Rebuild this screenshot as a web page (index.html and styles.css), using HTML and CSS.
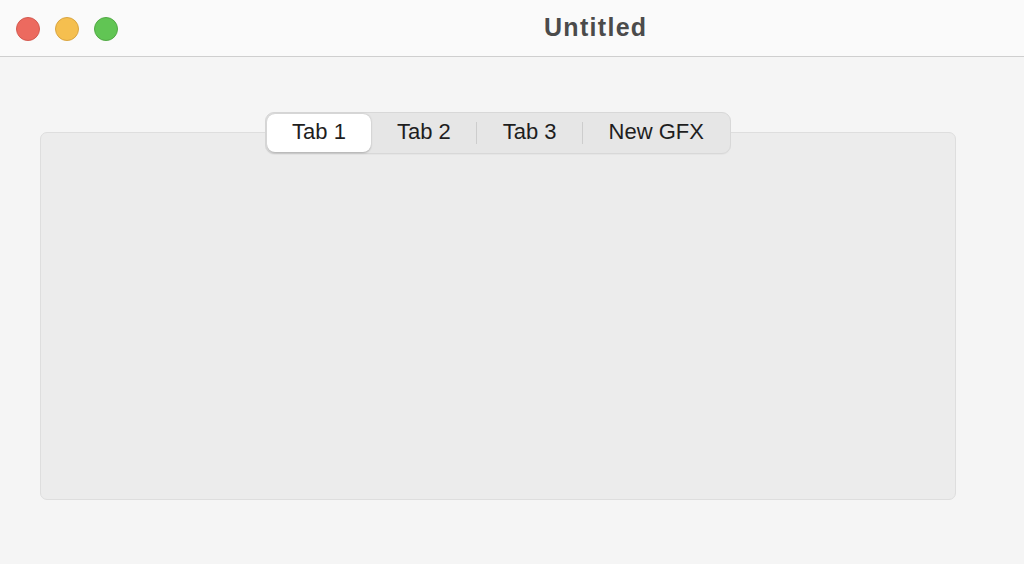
FILE: index.html
```html
<!DOCTYPE html>
<html>
<head>
<meta charset="utf-8">
<link rel="stylesheet" href="styles.css">
</head>
<body>
<div class="window">
  <div class="titlebar">
    <div class="lights">
      <span class="light red"></span>
      <span class="light yellow"></span>
      <span class="light green"></span>
    </div>
    <div class="title">Untitled</div>
  </div>
  <div class="content">
    <div class="tabview">
      <div class="segmented">
        <div class="seg selected">Tab 1</div>
        <div class="seg">Tab 2</div>
        <div class="sep"></div>
        <div class="seg">Tab 3</div>
        <div class="sep"></div>
        <div class="seg">New GFX</div>
      </div>
      <div class="panel"></div>
    </div>
  </div>
</div>
</body>
</html>
```

FILE: styles.css
```css
html, body {
  margin: 0;
  padding: 0;
}
body {
  width: 1024px;
  height: 564px;
  overflow: hidden;
  background: #f5f5f5;
  font-family: "Liberation Sans", Arial, sans-serif;
}
.window {
  display: flex;
  flex-direction: column;
  height: 564px;
}
.titlebar {
  height: 56px;
  border-bottom: 1px solid #cfcfcf;
  background: #fafafa;
  display: flex;
  align-items: center;
  box-sizing: content-box;
}
.lights {
  display: flex;
  gap: 15px;
  padding-left: 16px;
  margin-top: 1px;
}
.light {
  width: 24px;
  height: 24px;
  border-radius: 50%;
  box-sizing: border-box;
}
.red { background: #ec6a5f; border: 1px solid #d45a50; }
.yellow { background: #f5bf4f; border: 1px solid #d9a541; }
.green { background: #61c554; border: 1px solid #52a945; }
.title {
  margin-left: 426px;
  font-size: 25px;
  font-weight: bold;
  color: #4b4b4b;
  letter-spacing: 1.3px;
  margin-top: -2px;
}
.content {
  padding: 55px 68px 0 40px;
}
.tabview {
  display: flex;
  flex-direction: column;
  align-items: center;
}
.segmented {
  position: relative;
  z-index: 1;
  display: flex;
  align-items: center;
  height: 42px;
  box-sizing: border-box;
  padding: 1px;
  border: 1px solid #d8d8d8;
  border-radius: 9px;
  background: #e6e6e6;
  margin-bottom: -22px;
  box-shadow: 0 1px 1px rgba(0,0,0,0.03);
}
.seg {
  height: 38px;
  box-sizing: border-box;
  display: flex;
  align-items: center;
  padding: 0 25.5px 2px;
  font-size: 22px;
  color: #1e1e1e;
  border-radius: 8px;
}
.seg.selected {
  background: #ffffff;
  box-shadow: 0 0.5px 2px rgba(0,0,0,0.25);
}
.sep {
  width: 1px;
  height: 22px;
  background: #cdcdcd;
}
.panel {
  align-self: stretch;
  height: 368px;
  box-sizing: border-box;
  background: #ececec;
  border: 1px solid #dedede;
  border-radius: 7px;
}
```
